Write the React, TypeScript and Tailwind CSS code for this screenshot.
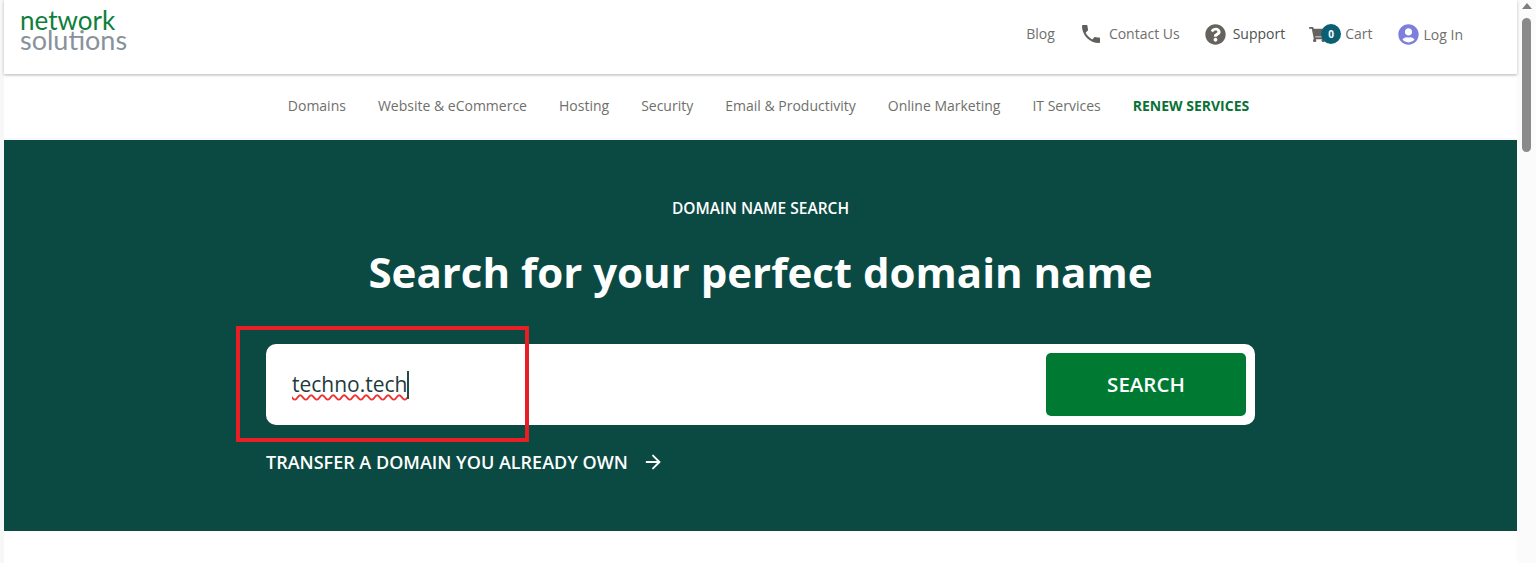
import { MdPhone } from "react-icons/md";
import { FaQuestionCircle, FaShoppingCart, FaUserCircle } from "react-icons/fa";
import { ArrowRight } from "lucide-react";

const navLinks = [
  "Domains",
  "Website & eCommerce",
  "Hosting",
  "Security",
  "Email & Productivity",
  "Online Marketing",
  "IT Services",
];

function Logo() {
  return (
    <div className="flex w-[128px] flex-col pl-4 pt-[11px] font-['Lato',sans-serif] leading-[19px]">
      <span className="text-[26px] text-[#0f7f3d]">network</span>
      <span className="text-[27px] text-[#87929a]">solutions</span>
    </div>
  );
}

function TopBar() {
  return (
    <header className="relative flex h-[74px] items-start justify-between bg-white shadow-[0_1px_3px_rgba(0,0,0,0.25)]">
      <Logo />
      <div className="flex items-center pr-[54px] pt-[22px] text-sm text-[#6f6f6b]">
        <span className="mr-[24px]">Blog</span>
        <MdPhone className="mr-[6px] text-[24px] text-[#5f5f5b]" />
        <span className="mr-[25px]">Contact Us</span>
        <FaQuestionCircle className="mr-[7px] text-[21px] text-[#66635e]" />
        <span className="mr-[24px] text-[14px] text-[#4f4f4b]">Support</span>
        <div className="mr-[4px] flex items-center">
          <FaShoppingCart className="text-[17px] text-[#66635e]" />
          <span className="-ml-[5px] flex h-5 w-5 items-center justify-center rounded-full bg-[#0b5f73] text-[10px] font-bold text-white">
            0
          </span>
        </div>
        <span className="mr-[25px]">Cart</span>
        <FaUserCircle className="mr-[5px] text-[21px] text-[#7c7fdc]" />
        <span className="mt-[2px]">Log In</span>
      </div>
    </header>
  );
}

function NavBar() {
  return (
    <nav className="mt-[2px] flex h-[62px] items-center justify-center gap-8 bg-white pb-[2px] pl-[16px] text-sm text-[#6f6f6b]">
      {navLinks.map((link) => (
        <span key={link}>{link}</span>
      ))}
      <span className="font-bold text-[#0a7136]">RENEW SERVICES</span>
    </nav>
  );
}

function Hero() {
  return (
    <section className="relative mt-[2px] flex h-[391px] flex-col items-center bg-[#0a4a43] pt-[58px] text-white">
      <p className="text-[15.5px] font-semibold leading-5">DOMAIN NAME SEARCH</p>
      <h1 className="mt-[26px] text-[42px] font-bold leading-[56px]">
        Search for your perfect domain name
      </h1>
      <div className="mt-[44px] flex h-[81px] w-[989px] items-center justify-between rounded-[10px] bg-white pl-[26px] pr-[9px]">
        <div className="flex items-center text-[21px] text-[#1d3b3a]">
          <span className="underline decoration-[#e33] decoration-wavy decoration-[1.5px] underline-offset-2">
            techno.tech
          </span>
          <span className="h-7 w-[2px] bg-[#244a44]" />
        </div>
        <button className="h-[63px] w-[200px] rounded-[5px] bg-[#007a33] text-[20.5px] font-semibold text-white">
          SEARCH
        </button>
      </div>
      <div className="mt-[25px] flex w-[989px] items-center gap-[14px] text-lg font-semibold leading-6">
        <span>TRANSFER A DOMAIN YOU ALREADY OWN</span>
        <ArrowRight size={22} />
      </div>
      <div className="absolute left-[232px] top-[186px] h-[116px] w-[293px] border-4 border-[#e81e25]" />
    </section>
  );
}

function Scrollbar() {
  return (
    <div className="flex w-[19px] shrink-0 flex-col items-center bg-[#fbfbfb] pt-[3px]">
      <div className="h-0 w-0 border-x-[5px] border-b-[6px] border-x-transparent border-b-[#7f7f7f]" />
      <div className="mt-[9px] h-[134px] w-[9px] rounded-full bg-[#8a8a8a]" />
    </div>
  );
}

export default function App() {
  return (
    <div className="flex h-[563px] overflow-hidden bg-[#f7f7f7] font-['Open_Sans',sans-serif]">
      <div className="w-1 shrink-0" />
      <main className="flex-1">
        <TopBar />
        <NavBar />
        <Hero />
        <div className="h-[32px] bg-white" />
      </main>
      <Scrollbar />
    </div>
  );
}
